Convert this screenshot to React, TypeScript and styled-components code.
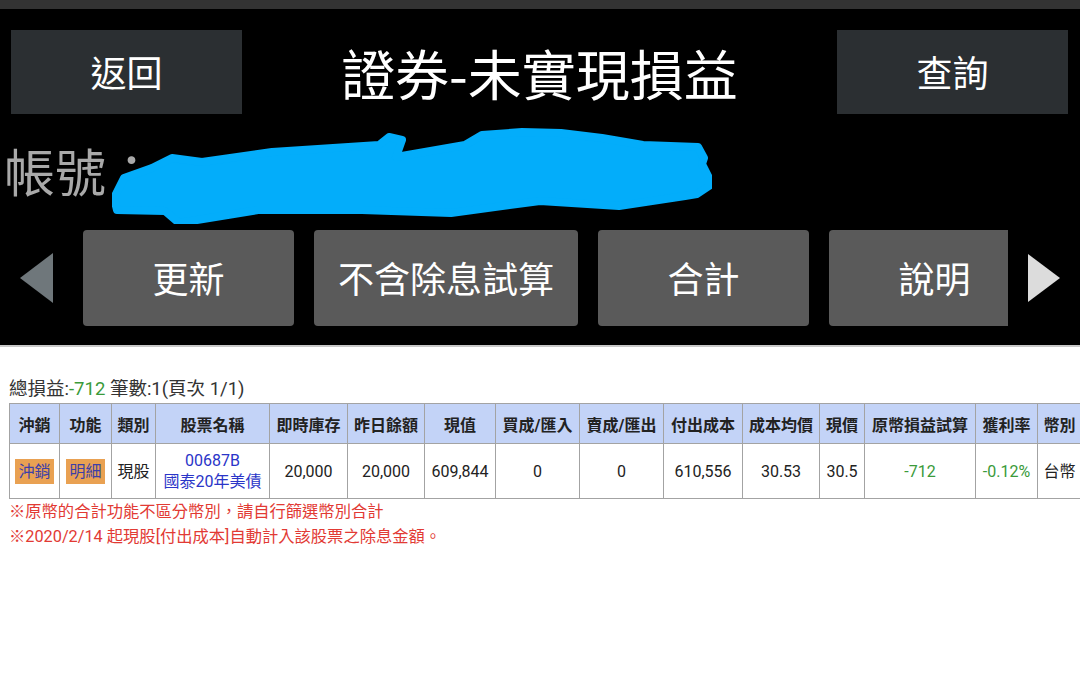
import React from "react";
import styled, { createGlobalStyle } from "styled-components";

const GlobalStyle = createGlobalStyle`
  html, body {
    margin: 0;
    padding: 0;
    background: #ffffff;
    overflow: hidden;
  }
  body {
    font-family: Roboto, "Noto Sans CJK TC", "Noto Sans", sans-serif;
  }
  * { box-sizing: border-box; }
`;

const Page = styled.div`
  width: 1080px;
  height: 684px;
  overflow: hidden;
  background: #ffffff;
`;

const StatusStrip = styled.div`
  height: 9px;
  background: #333333;
`;

const DarkPanel = styled.div`
  background: #000000;
  border-bottom: 2px solid #c8c8c8;
  padding-bottom: 19px;
`;

const TopBar = styled.div`
  display: flex;
  align-items: center;
  justify-content: space-between;
  padding: 21px 12px 0 11px;
`;

const TopButton = styled.div`
  width: 231px;
  height: 84px;
  background: #2b2f32;
  color: #ffffff;
  font-family: "Noto Sans CJK TC", sans-serif;
  font-size: 36px;
  display: flex;
  align-items: center;
  justify-content: center;
  padding-bottom: 2px;
`;

const Title = styled.div`
  color: #ffffff;
  font-family: "Noto Sans CJK TC", sans-serif;
  font-size: 54px;
  line-height: 1;
  padding-top: 2px;
`;

const AccountRow = styled.div`
  position: relative;
  height: 116px;
  display: flex;
  align-items: center;
  padding-left: 4px;
  padding-bottom: 4px;
`;

const AccountLabel = styled.span`
  color: #a9a9a9;
  font-family: "Noto Sans CJK TC", sans-serif;
  font-size: 51px;
  line-height: 1;
`;

const Scribble = styled.svg`
  position: absolute;
  left: 112px;
  top: 14px;
  width: 600px;
  height: 96px;
`;

const NavRow = styled.div`
  display: flex;
  align-items: center;
  height: 96px;
`;

const ArrowSlot = styled.div`
  width: 72px;
  height: 100%;
  display: flex;
  align-items: center;
  justify-content: center;
  flex-shrink: 0;
`;

const TriangleLeft = styled.div`
  width: 0;
  height: 0;
  border-top: 25px solid transparent;
  border-bottom: 25px solid transparent;
  border-right: 33px solid #6f777b;
`;

const TriangleRight = styled.div`
  width: 0;
  height: 0;
  border-top: 24px solid transparent;
  border-bottom: 24px solid transparent;
  border-left: 32px solid #dcdcdc;
`;

const NavViewport = styled.div`
  flex: 1;
  overflow: hidden;
  height: 100%;
  padding-left: 11px;
`;

const NavTrack = styled.div`
  display: flex;
  gap: 20px;
  height: 100%;
`;

const NavButton = styled.div<{ $w: number }>`
  width: ${(p) => p.$w}px;
  flex-shrink: 0;
  height: 100%;
  background: #5a5a5a;
  border-radius: 4px;
  color: #ffffff;
  font-family: "Noto Sans CJK TC", sans-serif;
  font-size: 36px;
  display: flex;
  align-items: center;
  justify-content: center;
  padding-bottom: 2px;
`;

const Content = styled.div`
  padding: 30px 0 0 9px;
  color: #222222;
  font-size: 16px;
`;

const Summary = styled.div`
  height: 26px;
  line-height: 24px;
  font-size: 18.5px;
  color: #333333;
  white-space: nowrap;
`;

const Green = styled.span`
  color: #3a9a3a;
`;

const Table = styled.table`
  border-collapse: collapse;
  table-layout: fixed;
  width: 1072px;
  font-size: 16px;
`;

const Th = styled.th<{ $w: number }>`
  width: ${(p) => p.$w}px;
  height: 40px;
  background: #c3d3f7;
  border: 1px solid #a3a3a3;
  color: #222222;
  font-weight: bold;
  text-align: center;
  white-space: nowrap;
  padding: 0;
`;

const Td = styled.td<{ $color?: string }>`
  height: 55px;
  border: 1px solid #a3a3a3;
  text-align: center;
  white-space: nowrap;
  color: ${(p) => p.$color || "#222222"};
  padding: 0;
  line-height: 21px;
`;

const OrangeTag = styled.span`
  display: inline-block;
  background: #e9a152;
  color: #3c3fa8;
  padding: 2px 3px 2px;
  line-height: 21px;
`;

const StockLink = styled.div`
  color: #2a35c8;
`;

const Note = styled.div`
  color: #e23a34;
  height: 25px;
  line-height: 25px;
  font-size: 16.3px;
  white-space: nowrap;
`;

const cols: [string, number][] = [
  ["沖銷", 50],
  ["功能", 52],
  ["類別", 44],
  ["股票名稱", 114],
  ["即時庫存", 78],
  ["昨日餘額", 77],
  ["現值", 71],
  ["買成/匯入", 84],
  ["賣成/匯出", 84],
  ["付出成本", 79],
  ["成本均價", 77],
  ["現價", 45],
  ["原幣損益試算", 111],
  ["獲利率", 62],
  ["幣別", 44],
];

const scribblePath =
  "M2,70 L12,50 L40,40 L60,30 L90,34 L160,24 L267,17 L277,9 L290,12 L284,29 L353,17 L370,7 L410,4 L449,5 L490,10 L531,17 L586,19 L592,30 L590,36 L597,50 L597,58 L585,66 L573,68 L507,78 L428,73 L339,85 L250,82 L146,82 L67,95 L53,83 L5,82 Z";

export default function App() {
  return (
    <Page>
      <GlobalStyle />
      <StatusStrip />
      <DarkPanel>
        <TopBar>
          <TopButton>返回</TopButton>
          <Title>證券-未實現損益</Title>
          <TopButton>查詢</TopButton>
        </TopBar>
        <AccountRow>
          <AccountLabel>帳號：</AccountLabel>
          <Scribble viewBox="0 0 600 96">
            <path
              d={scribblePath}
              fill="#03adfa"
              stroke="#03adfa"
              strokeWidth={8}
              strokeLinejoin="round"
            />
          </Scribble>
        </AccountRow>
        <NavRow>
          <ArrowSlot>
            <TriangleLeft />
          </ArrowSlot>
          <NavViewport>
            <NavTrack>
              <NavButton $w={211}>更新</NavButton>
              <NavButton $w={264}>不含除息試算</NavButton>
              <NavButton $w={211}>合計</NavButton>
              <NavButton $w={211}>說明</NavButton>
            </NavTrack>
          </NavViewport>
          <ArrowSlot>
            <TriangleRight />
          </ArrowSlot>
        </NavRow>
      </DarkPanel>
      <Content>
        <Summary>
          總損益:<Green>-712</Green> 筆數:1(頁次 1/1)
        </Summary>
        <Table>
          <thead>
            <tr>
              {cols.map(([label, w]) => (
                <Th key={label} $w={w}>
                  {label}
                </Th>
              ))}
            </tr>
          </thead>
          <tbody>
            <tr>
              <Td>
                <OrangeTag>沖銷</OrangeTag>
              </Td>
              <Td>
                <OrangeTag>明細</OrangeTag>
              </Td>
              <Td>現股</Td>
              <Td>
                <StockLink>00687B</StockLink>
                <StockLink>國泰20年美債</StockLink>
              </Td>
              <Td>20,000</Td>
              <Td>20,000</Td>
              <Td>609,844</Td>
              <Td>0</Td>
              <Td>0</Td>
              <Td>610,556</Td>
              <Td>30.53</Td>
              <Td>30.5</Td>
              <Td $color="#3a9a3a">-712</Td>
              <Td $color="#3a9a3a">-0.12%</Td>
              <Td>台幣</Td>
            </tr>
          </tbody>
        </Table>
        <Note>※原幣的合計功能不區分幣別，請自行篩選幣別合計</Note>
        <Note>※2020/2/14 起現股[付出成本]自動計入該股票之除息金額。</Note>
      </Content>
    </Page>
  );
}
